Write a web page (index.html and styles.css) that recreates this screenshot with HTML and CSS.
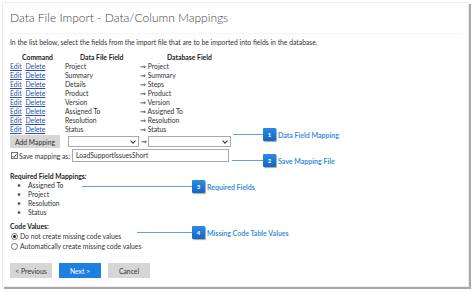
FILE: index.html
```html
<!DOCTYPE html>
<html lang="en">
<head>
  <meta charset="UTF-8">
  <title>Data File Import - Data/Column Mappings</title>
  <link rel="stylesheet" href="styles.css">
</head>
<body>

<div class="panel">
  <h1 class="title">Data File Import - Data/Column Mappings</h1>
  <p class="intro">In the list below, select the fields from the import file that are to be imported into fields in the database.</p>

  <table class="mappings">
    <tr>
      <th class="cmd">Command</th>
      <th class="src">Data File Field</th>
      <th class="dst">Database Field</th>
    </tr>
    <tr><td><a href="#">Edit</a> <a href="#">Delete</a></td><td>Project</td><td>&rArr; Project</td></tr>
    <tr><td><a href="#">Edit</a> <a href="#">Delete</a></td><td>Summary</td><td>&rArr; Summary</td></tr>
    <tr><td><a href="#">Edit</a> <a href="#">Delete</a></td><td>Details</td><td>&rArr; Steps</td></tr>
    <tr><td><a href="#">Edit</a> <a href="#">Delete</a></td><td>Product</td><td>&rArr; Product</td></tr>
    <tr><td><a href="#">Edit</a> <a href="#">Delete</a></td><td>Version</td><td>&rArr; Version</td></tr>
    <tr><td><a href="#">Edit</a> <a href="#">Delete</a></td><td>Assigned To</td><td>&rArr; Assigned To</td></tr>
    <tr><td><a href="#">Edit</a> <a href="#">Delete</a></td><td>Resolution</td><td>&rArr; Resolution</td></tr>
    <tr><td><a href="#">Edit</a> <a href="#">Delete</a></td><td>Status</td><td>&rArr; Status</td></tr>
  </table>

  <div class="add-row">
    <button class="btn add">Add Mapping</button>
    <div class="select small"><span class="caret"></span></div>
    <span class="arrow">&rArr;</span>
    <div class="select wide"><span class="caret"></span></div>
  </div>

  <div class="save-row">
    <span class="check"><svg viewBox="0 0 8 8" width="6" height="6"><path d="M1 4.2 L3.2 6.4 L7 1.4" fill="none" stroke="#222" stroke-width="1.3"/></svg></span>
    <span>Save mapping as:</span>
    <div class="text-input">LoadSupportIssuesShort</div>
  </div>

  <h2 class="label first">Required Field Mappings:</h2>
  <ul class="required">
    <li>Assigned To</li>
    <li>Project</li>
    <li>Resolution</li>
    <li>Status</li>
  </ul>

  <h2 class="label">Code Values:</h2>
  <div class="radio-row"><span class="radio on"></span>Do not create missing code values</div>
  <div class="radio-row"><span class="radio"></span>Automatically create missing code values</div>

  <div class="buttons">
    <button class="btn">&lt; Previous</button>
    <button class="btn primary">Next &gt;</button>
    <button class="btn">Cancel</button>
  </div>

  <!-- callouts -->
  <div class="callout c1"><span class="line"></span><span class="badge">1</span><span class="note">Data Field Mapping</span></div>
  <div class="callout c2"><span class="line"></span><span class="badge">2</span><span class="note">Save Mapping File</span></div>
  <div class="callout c3"><span class="line"></span><span class="badge">3</span><span class="note">Required Fields</span></div>
  <div class="callout c4"><span class="line"></span><span class="badge">4</span><span class="note">Missing Code Table Values</span></div>
</div>

</body>
</html>
```

FILE: styles.css
```css
* {
  margin: 0;
  padding: 0;
  box-sizing: border-box;
}
body {
  font-family: Lato, "Open Sans", sans-serif;
  font-size: 6.8px;
  color: #333;
  background-color: #fff;
  padding: 2px;
}
.panel {
  position: relative;
  width: 467px;
  height: 285px;
  border: 1px solid #ececec;
  box-shadow: 2px 2px 0 #a8a8a8;
  padding: 6px 7px 0 7px;
}
.title {
  font-weight: 300;
  font-size: 12px;
  line-height: 17px;
  color: #444;
  padding-bottom: 7px;
  border-bottom: 1px solid #f4f4f4;
}
.intro {
  margin-top: 4px;
  line-height: 9px;
}
.mappings {
  margin-top: 6px;
  border-collapse: collapse;
}
.mappings th, .mappings td {
  padding: 0;
  line-height: 9px;
  text-align: left;
  white-space: nowrap;
}
.mappings th {
  font-weight: bold;
  color: #222;
}
.mappings .cmd { width: 55px; text-align: center; }
.mappings .src { width: 75px; padding-left: 15px; }
.mappings .dst { width: 100px; padding-left: 27px; }
.mappings a {
  color: #2a4fb0;
  margin-right: 2px;
}
.add-row {
  display: flex;
  align-items: center;
  margin-top: 1px;
  height: 13px;
}
.btn {
  font-family: inherit;
  font-size: 6.8px;
  color: #333;
  background-color: #d6d6d6;
  border: none;
  height: 15px;
  width: 42px;
}
.btn.add {
  width: 50px;
  height: 13px;
}
.select {
  position: relative;
  height: 11px;
  border: 1px solid #a9a9a9;
  background-color: #fff;
}
.select.small {
  width: 71px;
  margin-left: 8px;
}
.select.wide {
  width: 83px;
}
.caret {
  position: absolute;
  right: 3px;
  top: 2px;
  width: 4px;
  height: 4px;
  border-right: 1px solid #333;
  border-bottom: 1px solid #333;
  transform: rotate(45deg);
}
.arrow {
  width: 9px;
  text-align: center;
}
.save-row {
  display: flex;
  align-items: center;
  margin-top: 1px;
  height: 13px;
}
.check {
  display: inline-flex;
  align-items: center;
  justify-content: center;
  width: 7px;
  height: 7px;
  border: 1px solid #777;
  margin: 0 1px 0 1px;
}
.text-input {
  margin-left: 2px;
  width: 157px;
  height: 13px;
  border: 1px solid #a9a9a9;
  padding-left: 3px;
  line-height: 11px;
}
.label {
  font-size: 6.8px;
  font-weight: bold;
  color: #222;
  line-height: 9px;
  margin-top: 5px;
}
.label.first {
  margin-top: 10px;
}
.required {
  list-style: none;
}
.required li {
  line-height: 9px;
  padding-left: 7px;
}
.required li::before {
  content: "\2022";
  display: inline-block;
  width: 11px;
  color: #555;
}
.radio-row {
  display: flex;
  align-items: center;
  height: 10px;
}
.radio {
  width: 7px;
  height: 7px;
  border: 1px solid #777;
  border-radius: 50%;
  margin: 0 2px 0 1px;
  display: inline-flex;
  align-items: center;
  justify-content: center;
}
.radio.on::after {
  content: "";
  width: 3px;
  height: 3px;
  border-radius: 50%;
  background-color: #222;
}
.buttons {
  display: flex;
  gap: 7px;
  margin-top: 12px;
}
.btn.primary {
  background-color: #1f7fe0;
  color: #fff;
}
.callout {
  position: absolute;
  display: flex;
  align-items: center;
  height: 13px;
}
.callout .line {
  height: 1px;
  background-color: #5aa3e6;
}
.badge {
  width: 13px;
  height: 13px;
  background: linear-gradient(#2c8be6, #1566c2);
  color: #fff;
  font-size: 6px;
  font-weight: bold;
  display: flex;
  align-items: center;
  justify-content: center;
  border-radius: 1px;
  box-shadow: 1px 1px 1px rgba(0, 0, 0, 0.35);
}
.note {
  margin-left: 2px;
  color: #3c8fdb;
  font-size: 7px;
  font-weight: bold;
}
.c1 { left: 230px; top: 125px; }
.c1 .line { width: 30px; }
.c2 { left: 229px; top: 151px; }
.c2 .line { width: 31px; }
.c3 { left: 79px; top: 177px; }
.c3 .line { width: 110px; }
.c4 { left: 134px; top: 223px; }
.c4 .line { width: 55px; }
```
